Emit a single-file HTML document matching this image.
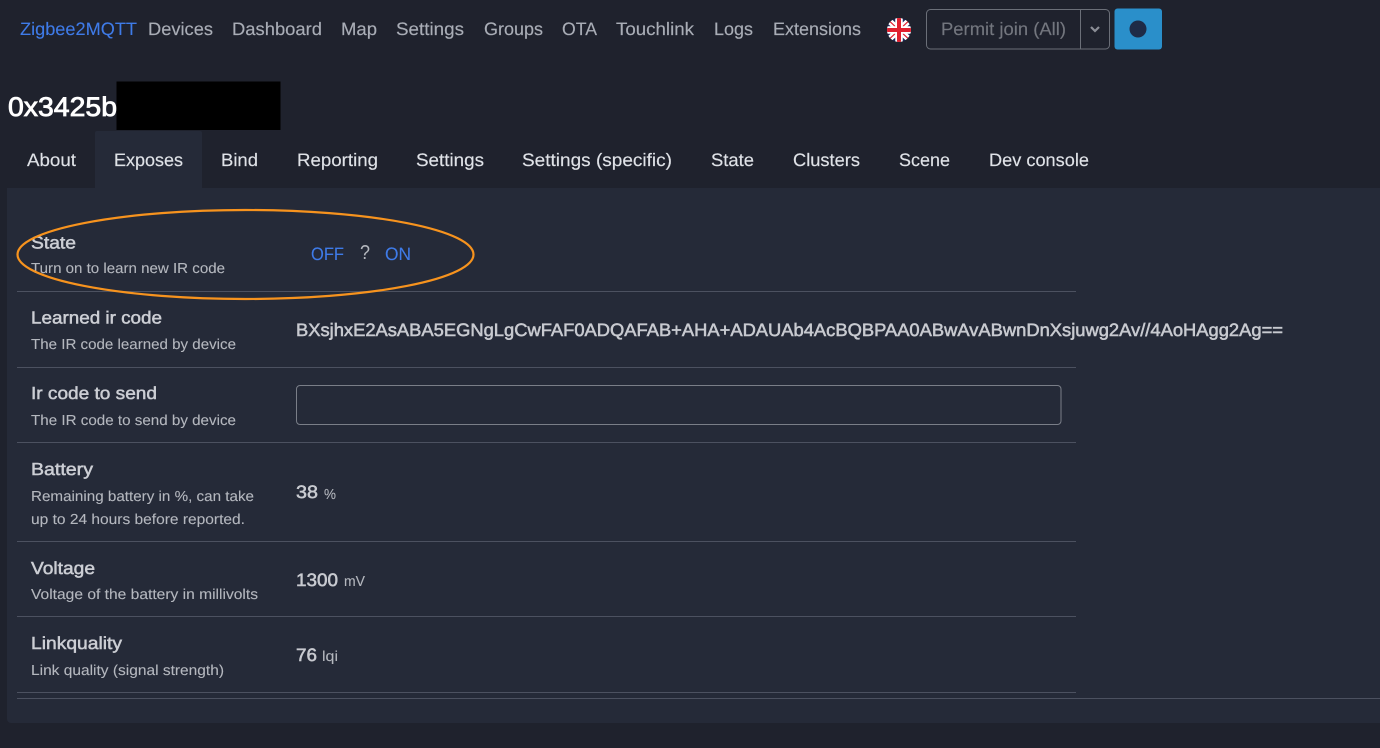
<!DOCTYPE html>
<html lang="en">
<head>
<meta charset="utf-8">
<title>Zigbee2MQTT</title>
<style>
html,body{margin:0;padding:0;background:#1f222d;width:1380px;height:748px;overflow:hidden}
svg{display:block}
text{font-family:"Liberation Sans",sans-serif;text-rendering:geometricPrecision}
.nav{font-size:18px;fill:#a9adb6;stroke:#a9adb6;stroke-width:.15px}
.tab{font-size:18px;fill:#dfe2e7;stroke:#dfe2e7;stroke-width:.15px}
.lbl{font-size:17.5px;fill:#ccced4;stroke:#ccced4;stroke-width:.5px}
.dsc{font-size:14.5px;fill:#b4b7be;stroke:#b4b7be;stroke-width:.1px}
.val{font-size:18px;fill:#c8cad0;stroke:#c8cad0;stroke-width:.55px}
.unit{font-size:14.5px;fill:#b4b7be;stroke:#b4b7be;stroke-width:.1px}
.lnk{font-size:18px;fill:#3f7be8;stroke:#3f7be8;stroke-width:.1px}
.ln{stroke:#4c5160;stroke-width:1}
</style>
</head>
<body>
<svg width="1380" height="748" viewBox="0 0 1380 748" xmlns="http://www.w3.org/2000/svg">
<rect width="1380" height="748" fill="#1f222d"/>

<!-- navbar -->
<text x="20" y="35" class="lnk" textLength="117" lengthAdjust="spacingAndGlyphs">Zigbee2MQTT</text>
<text x="148" y="35" class="nav" textLength="65" lengthAdjust="spacingAndGlyphs">Devices</text>
<text x="232" y="35" class="nav" textLength="90" lengthAdjust="spacingAndGlyphs">Dashboard</text>
<text x="341" y="35" class="nav" textLength="36" lengthAdjust="spacingAndGlyphs">Map</text>
<text x="396" y="35" class="nav" textLength="68" lengthAdjust="spacingAndGlyphs">Settings</text>
<text x="484" y="35" class="nav" textLength="59" lengthAdjust="spacingAndGlyphs">Groups</text>
<text x="562" y="35" class="nav" textLength="35" lengthAdjust="spacingAndGlyphs">OTA</text>
<text x="616" y="35" class="nav" textLength="78" lengthAdjust="spacingAndGlyphs">Touchlink</text>
<text x="714" y="35" class="nav" textLength="39" lengthAdjust="spacingAndGlyphs">Logs</text>
<text x="773" y="35" class="nav" textLength="88" lengthAdjust="spacingAndGlyphs">Extensions</text>

<!-- flag -->
<defs><clipPath id="fc"><circle cx="899" cy="30" r="12"/></clipPath></defs>
<g clip-path="url(#fc)">
<rect x="887" y="18" width="24" height="24" fill="#1f2a5c"/>
<path d="M885 17L913 43M913 17L885 43" stroke="#fff" stroke-width="6"/>
<path d="M885 17L913 43M913 17L885 43" stroke="#e0202f" stroke-width="1.2"/>
<path d="M899 16V44M885 30H913" stroke="#fff" stroke-width="7.5"/>
<path d="M899 16V44M885 30H913" stroke="#e0202f" stroke-width="4"/>
</g>

<!-- permit join -->
<rect x="926.5" y="9.5" width="183" height="39.5" rx="4" fill="#1f222d" stroke="#6b6f78"/>
<path d="M1080.5 9.5V49" stroke="#6b6f78"/>
<text x="941" y="35" font-size="18" fill="#73767e" stroke="#73767e" stroke-width=".15" textLength="125" lengthAdjust="spacingAndGlyphs">Permit join (All)</text>
<path d="M1091 27l4 4 4-4" fill="none" stroke="#8b8e96" stroke-width="2.2"/>
<rect x="1114.5" y="8.5" width="47.5" height="41" rx="3" fill="#2a8fca"/>
<circle cx="1138" cy="29" r="8.500" fill="#1e2b47"/>

<!-- title -->
<text x="8" y="116" font-size="27" fill="#fff" stroke="#fff" stroke-width=".8" textLength="109" lengthAdjust="spacingAndGlyphs">0x3425b</text>
<rect x="116.500" y="81.500" width="164" height="48.500" fill="#000"/>

<!-- panel -->
<path d="M95 188V133a2 2 0 0 1 2-2H200a2 2 0 0 1 2 2V188Z" fill="#252a38"/>
<path d="M7 188H1380V723H11a4 4 0 0 1-4-4Z" fill="#252a38"/>

<!-- tabs -->
<text x="27" y="166" class="tab" textLength="49" lengthAdjust="spacingAndGlyphs">About</text>
<text x="114" y="166" class="tab" textLength="69" lengthAdjust="spacingAndGlyphs">Exposes</text>
<text x="221" y="166" class="tab" textLength="37" lengthAdjust="spacingAndGlyphs">Bind</text>
<text x="297" y="166" class="tab" textLength="81" lengthAdjust="spacingAndGlyphs">Reporting</text>
<text x="416" y="166" class="tab" textLength="68" lengthAdjust="spacingAndGlyphs">Settings</text>
<text x="522" y="166" class="tab" textLength="150" lengthAdjust="spacingAndGlyphs">Settings (specific)</text>
<text x="711" y="166" class="tab" textLength="43" lengthAdjust="spacingAndGlyphs">State</text>
<text x="793" y="166" class="tab" textLength="67" lengthAdjust="spacingAndGlyphs">Clusters</text>
<text x="899" y="166" class="tab" textLength="51" lengthAdjust="spacingAndGlyphs">Scene</text>
<text x="989" y="166" class="tab" textLength="100" lengthAdjust="spacingAndGlyphs">Dev console</text>

<!-- rows -->
<path class="ln" d="M17 291.500H1076M17 367.500H1076M17 442.500H1076M17 541.500H1076M17 616.500H1076M17 692.500H1076M17 698.500H1380"/>

<text x="31" y="248.500" class="lbl" textLength="45" lengthAdjust="spacingAndGlyphs">State</text>
<text x="31" y="273" class="dsc" textLength="194" lengthAdjust="spacingAndGlyphs">Turn on to learn new IR code</text>
<text x="311" y="260" class="lnk" textLength="33" lengthAdjust="spacingAndGlyphs">OFF</text>
<text x="360" y="259" font-size="20" fill="#b4b7be" textLength="10" lengthAdjust="spacingAndGlyphs">?</text>
<text x="385" y="260" class="lnk" textLength="26" lengthAdjust="spacingAndGlyphs">ON</text>

<text x="31" y="323.500" class="lbl" textLength="131" lengthAdjust="spacingAndGlyphs">Learned ir code</text>
<text x="31" y="349" class="dsc" textLength="205" lengthAdjust="spacingAndGlyphs">The IR code learned by device</text>
<text x="296" y="336" class="val" textLength="987" lengthAdjust="spacingAndGlyphs">BXsjhxE2AsABA5EGNgLgCwFAF0ADQAFAB+AHA+ADAUAb4AcBQBPAA0ABwAvABwnDnXsjuwg2Av//4AoHAgg2Ag==</text>

<text x="31" y="399" class="lbl" textLength="126" lengthAdjust="spacingAndGlyphs">Ir code to send</text>
<text x="31" y="425" class="dsc" textLength="205" lengthAdjust="spacingAndGlyphs">The IR code to send by device</text>
<rect x="296.500" y="385.500" width="764.500" height="39" rx="3.500" fill="#252a38" stroke="#7a7e88"/>

<text x="31" y="475" class="lbl" textLength="62" lengthAdjust="spacingAndGlyphs">Battery</text>
<text x="31" y="501" class="dsc" textLength="223" lengthAdjust="spacingAndGlyphs">Remaining battery in %, can take</text>
<text x="31" y="524" class="dsc" textLength="214" lengthAdjust="spacingAndGlyphs">up to 24 hours before reported.</text>
<text x="296" y="498" class="val" textLength="22" lengthAdjust="spacingAndGlyphs">38</text>
<text x="324" y="499" class="unit" textLength="12" lengthAdjust="spacingAndGlyphs">%</text>

<text x="31" y="574" class="lbl" textLength="64" lengthAdjust="spacingAndGlyphs">Voltage</text>
<text x="31" y="599" class="dsc" textLength="227" lengthAdjust="spacingAndGlyphs">Voltage of the battery in millivolts</text>
<text x="296" y="586" class="val" textLength="42" lengthAdjust="spacingAndGlyphs">1300</text>
<text x="344" y="586" class="unit" textLength="21" lengthAdjust="spacingAndGlyphs">mV</text>

<text x="31" y="649" class="lbl" textLength="91" lengthAdjust="spacingAndGlyphs">Linkquality</text>
<text x="31" y="675" class="dsc" textLength="193" lengthAdjust="spacingAndGlyphs">Link quality (signal strength)</text>
<text x="296" y="661" class="val" textLength="21" lengthAdjust="spacingAndGlyphs">76</text>
<text x="322" y="661" class="unit" textLength="16" lengthAdjust="spacingAndGlyphs">lqi</text>

<!-- annotation -->
<ellipse cx="245.500" cy="254.500" rx="228" ry="44.500" fill="none" stroke="#f7931e" stroke-width="2.200"/>
</svg>
</body>
</html>
